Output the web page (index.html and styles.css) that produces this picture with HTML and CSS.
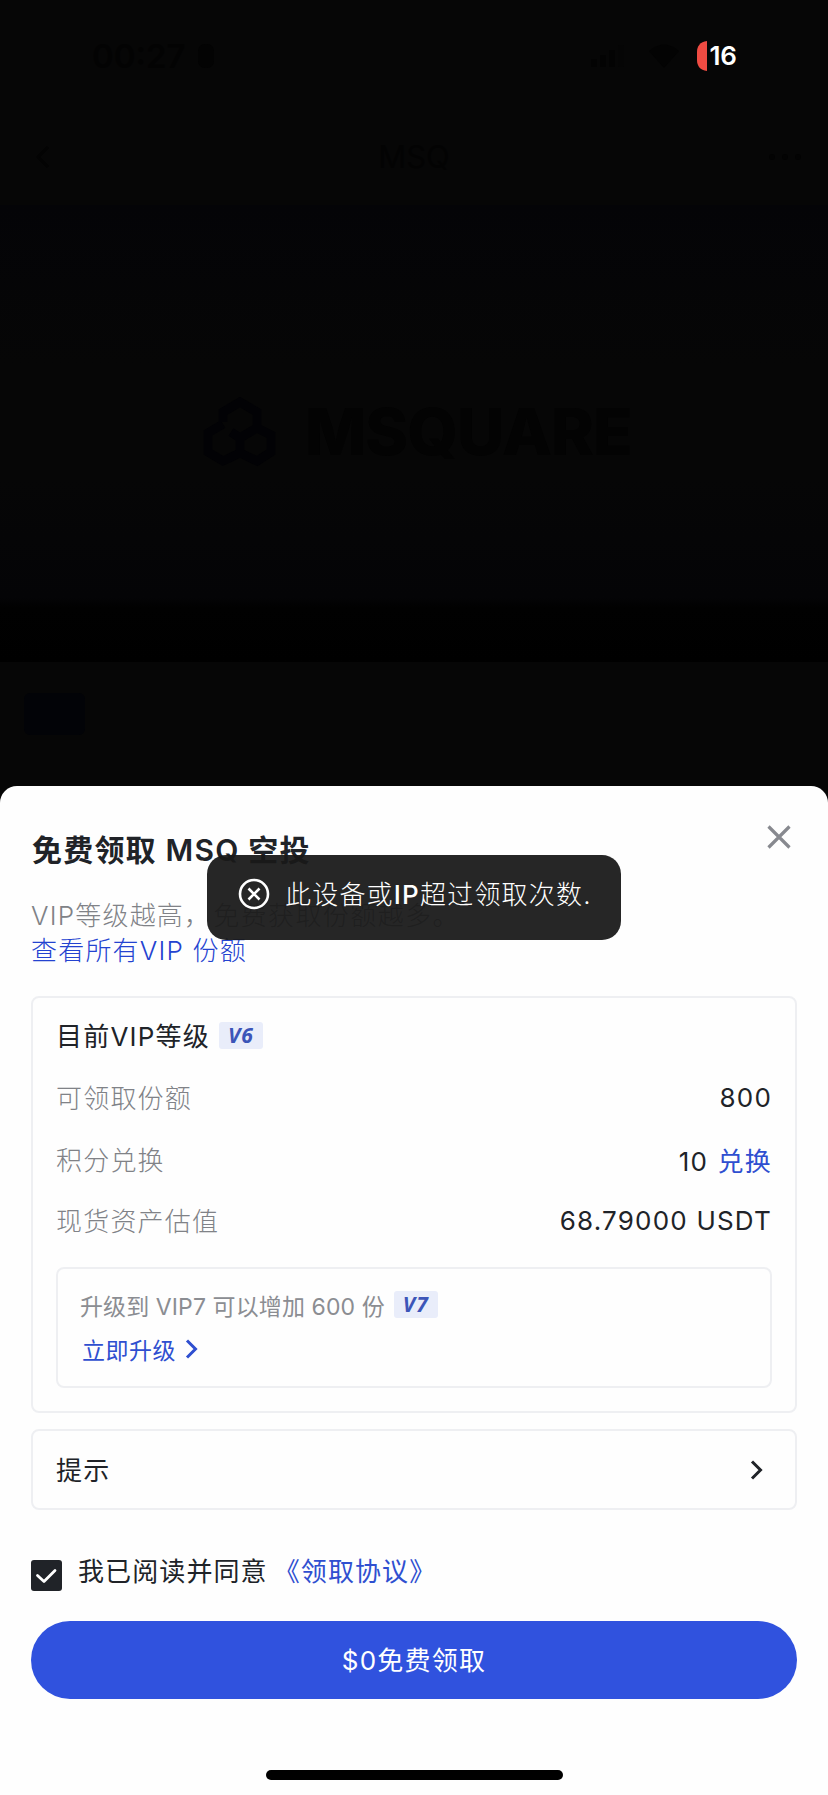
FILE: index.html
```html
<!DOCTYPE html>
<html lang="zh-CN">
<head>
<meta charset="utf-8">
<title>MSQ</title>
<link rel="stylesheet" href="styles.css">
</head>
<body>
<div class="screen">
  <div class="status">
    <div class="clock"><span>00:27</span>
      <svg width="20" height="28" viewBox="0 0 20 28"><rect x="2" y="2" width="16" height="24" rx="7" fill="#030303"/></svg>
    </div>
    <div class="signals">
      <svg width="36" height="24" viewBox="0 0 36 24" fill="#030303"><rect x="0" y="15" width="6" height="8" rx="1"/><rect x="9" y="11" width="6" height="12" rx="1"/><rect x="18" y="6" width="6" height="17" rx="1"/><rect x="27" y="1" width="6" height="22" rx="1" fill="#050505"/></svg>
      <svg class="wifi" width="34" height="26" viewBox="0 0 34 26"><path d="M2 8Q17-5 32 8L17 25Z" fill="#030303"/></svg>
      <svg class="battery" width="10" height="30" viewBox="0 0 10 30"><path d="M10 0V30C3 29 0 25 0 19V11C0 5 3 1 10 0Z" fill="#ef4b42"/></svg>
      <span class="level">16</span>
    </div>
  </div>
  <div class="nav">
    <svg width="14" height="24" viewBox="0 0 14 24" fill="none" stroke="#030303" stroke-width="3"><path d="M12 2L2 12L12 22"/></svg>
    <span class="nav-title">MSQ</span>
    <svg width="34" height="8" viewBox="0 0 34 8" fill="#030303"><circle cx="4" cy="4" r="3"/><circle cx="17" cy="4" r="3"/><circle cx="30" cy="4" r="3"/></svg>
  </div>
  <div class="banner">
    <svg width="74" height="70" viewBox="0 0 74 70" fill="none" stroke="#020205" stroke-width="9"><path d="M20 25V15L37 5L54 15V31L37 41L28 35M20 27L5 36V55L20 64L37 56V41M54 31L68 38V55L54 64L37 56"/></svg>
    <span>MSQUARE</span>
  </div>
  <div class="tabs"><div class="chip"></div></div>

  <div class="sheet">
    <div class="heading">
      <h1>免费领取 MSQ 空投</h1>
      <svg class="close" width="24" height="24" viewBox="0 0 24 24" fill="none" stroke="#87898f" stroke-width="3.2"><path d="M1.5 1.5L22.5 22.5M22.5 1.5L1.5 22.5"/></svg>
    </div>
    <p class="desc">VIP等级越高，<span class="more">免费获取份额越多。</span></p>
    <a class="all">查看所有VIP 份额</a>

    <div class="card">
      <div class="row level-row"><span>目前VIP等级</span><b class="badge">V6</b></div>
      <div class="row"><span class="label">可领取份额</span><span class="value">800</span></div>
      <div class="row"><span class="label">积分兑换</span><span class="value">10 <a class="swap">兑换</a></span></div>
      <div class="row"><span class="label">现货资产估值</span><span class="value">68.79000 USDT</span></div>
      <div class="upgrade">
        <div class="up-line"><span class="up-text">升级到 VIP7 可以增加 600 份</span><b class="badge">V7</b></div>
        <div class="up-link"><span>立即升级</span>
          <svg width="14" height="20" viewBox="0 0 14 20" fill="none" stroke="#2f4fd0" stroke-width="3"><path d="M2 1.5L10.5 10L2 18.5"/></svg>
        </div>
      </div>
    </div>

    <div class="tips"><span>提示</span>
      <svg width="14" height="20" viewBox="0 0 14 20" fill="none" stroke="#202328" stroke-width="3"><path d="M2 1.5L10.5 10L2 18.5"/></svg>
    </div>

    <div class="agree">
      <span class="box"><svg width="31" height="31" viewBox="0 0 31 31" fill="none" stroke="#fff" stroke-width="2.8" stroke-linecap="round" stroke-linejoin="round"><path d="M6.5 15.5L13 21.5L24 10.5"/></svg></span>
      <span class="agree-text">我已阅读并同意</span><a class="terms">《领取协议》</a>
    </div>
    <button class="claim">$0免费领取</button>
    <div class="home"></div>
  </div>

  <div class="toast">
    <svg width="32" height="32" viewBox="0 0 32 32" fill="none" stroke="#fff" stroke-width="2.6"><circle cx="16" cy="16" r="14"/><path d="M10.5 10.5L21.5 21.5M21.5 10.5L10.5 21.5"/></svg>
    <span class="toast-text">此设备或<span class="ip">IP</span>超过领取次数.</span>
  </div>
</div>
</body>
</html>
```
FILE: styles.css
```css
* { box-sizing: border-box; }
body { margin: 0; background: #060606; }
svg { display: block; flex: none; }
.screen {
  position: relative;
  width: 828px;
  height: 1795px;
  overflow: hidden;
  background: #060606;
  color: #202328;
  font-family: Inter, "Noto Sans CJK SC", sans-serif;
  white-space: nowrap;
}
.status {
  height: 112px;
  padding: 0 91px 0 92px;
  display: flex;
  justify-content: space-between;
  align-items: center;
}
.clock { display: flex; gap: 10px; align-items: center; font-size: 33px; font-weight: 600; color: #030303; }
.signals { display: flex; align-items: center; }
.wifi { margin-left: 20px; }
.battery { margin-left: 16px; }
.level { margin-left: 2px; font-size: 26px; font-weight: 600; line-height: 32px; color: #fff; }
.nav {
  height: 93px;
  padding: 0 26px 4px 36px;
  display: flex;
  justify-content: space-between;
  align-items: center;
  font-size: 31px;
  color: #030303;
}
.nav-title { padding-left: 10px; }
.banner {
  height: 457px;
  padding: 0 0 4px 203px;
  display: flex;
  align-items: center;
  gap: 28px;
  background: linear-gradient(#040407 0, #060606 35%, #060606 60%, #040406 86%, #010101 88%, #000 100%);
  font-size: 65px;
  font-weight: 800;
  letter-spacing: -1px;
  color: #030303;
}
.tabs { height: 124px; padding: 31px 24px; }
.chip { width: 61px; height: 42px; border-radius: 6px; background: #020307; }
.sheet {
  height: 1009px;
  padding: 0 31px;
  border-radius: 17px 17px 0 0;
  background: #fefefe;
}
.heading { height: 107px; padding-top: 39px; display: flex; justify-content: space-between; }
h1 { margin: 0 0 0 1px; font-size: 30px; line-height: 50px; font-weight: 600; letter-spacing: 1.2px; }
.close { margin: 0 6px 0 0; }
.desc { margin: 0; padding-top: 5px; height: 40px; font-size: 26px; line-height: 36px; font-weight: 300; letter-spacing: 1.2px; color: #808287; }
.more { margin-left: 2px; letter-spacing: 1.4px; }
.all { display: block; height: 63px; font-size: 26px; line-height: 36px; font-weight: 300; letter-spacing: 1.2px; color: #2443d0; }
.card { height: 417px; padding: 7px 23px 0; border: 2px solid #eeeff2; border-radius: 8px; }
.row { height: 61.7px; display: flex; justify-content: space-between; align-items: center; font-size: 26px; letter-spacing: 1.2px; }
.value { padding-bottom: 0; }
.level-row { justify-content: flex-start; gap: 9px; }
.level-row span, .label { position: relative; top: -1px; }
.label { font-weight: 300; color: #808287; }
.swap { margin-left: 1px; color: #2f4fd0; }
.badge {
  width: 44px;
  height: 27px;
  border-radius: 3px;
  background: #e9edfa;
  font: italic 700 21px/27px "Open Sans", sans-serif;
  letter-spacing: 1px;
  text-align: center;
  color: #3c55b8;
}
.upgrade { margin-top: 15px; height: 121px; padding: 15px 22px; border: 2px solid #eeeff2; border-radius: 8px; }
.up-line { height: 42px; display: flex; align-items: center; gap: 9px; font-size: 23px; letter-spacing: .1px; color: #8b8d92; }
.up-link { height: 46px; padding-left: 2px; display: flex; align-items: center; gap: 9px; font-size: 23px; letter-spacing: .5px; color: #2f4fd0; }
.tips { margin-top: 16px; height: 81px; padding: 0 31px 2px 23px; border: 2px solid #eeeff2; border-radius: 8px; display: flex; justify-content: space-between; align-items: center; font-size: 26px; letter-spacing: 1.2px; }
.tips svg { margin-top: 2px; }
.agree { margin-top: 42px; height: 69px; display: flex; align-items: flex-start; font-size: 26px; line-height: 40px; letter-spacing: 1.1px; }
.box { margin: 8px 16px 0 0; width: 31px; height: 31px; border-radius: 3px; background: #202328; }
.terms { margin-left: 6px; color: #2f4fd0; }
.claim { display: block; width: 766px; height: 78px; padding: 0 0 3px; border: 0; border-radius: 39px; background: #3052de; font: 26px Inter, "Noto Sans CJK SC", sans-serif; letter-spacing: 1.2px; color: #fff; }
.home { width: 297px; height: 10px; margin: 71px auto 0; border-radius: 5px; background: #000; }
.toast {
  position: absolute;
  left: 207px;
  top: 855px;
  width: 414px;
  height: 85px;
  padding: 0 0 8px 31px;
  border-radius: 19px;
  display: flex;
  align-items: center;
  gap: 15px;
  background: rgba(24, 24, 24, .94);
  font-size: 26px;
  letter-spacing: 1.2px;
  color: #fff;
}
.toast-text { padding-bottom: 3px; font-weight: 300; }
.ip { font-weight: 500; }
```
